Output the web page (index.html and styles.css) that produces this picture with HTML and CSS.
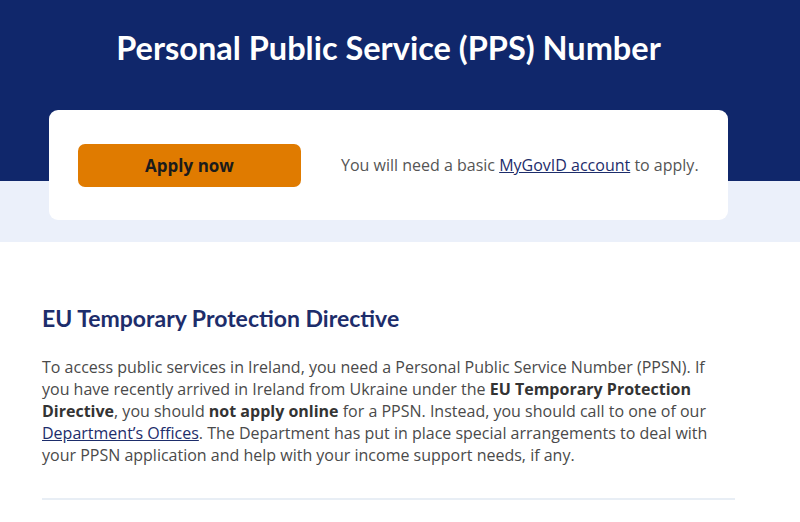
FILE: index.html
```
<!DOCTYPE html>
<html lang="en">
<head>
<meta charset="utf-8">
<title>Personal Public Service (PPS) Number</title>
<link rel="stylesheet" href="styles.css">
</head>
<body>
<header class="hero">
  <div class="hero-inner">
    <h1 class="title">Personal Public Service (PPS) Number</h1>
    <div class="card">
      <a class="btn" href="#">Apply now</a>
      <p class="note">You will need a basic <a href="#">MyGovID account</a> to apply.</p>
    </div>
  </div>
</header>
<main class="content">
  <h2 class="section-title">EU Temporary Protection Directive</h2>
  <p class="body-text">To access public services in Ireland, you need a Personal Public Service Number (PPSN). If you have recently arrived in Ireland from Ukraine under the <strong>EU Temporary Protection Directive</strong>, you should <strong>not apply online</strong> for a PPSN. Instead, you should call to one of our <a href="#">Department’s Offices</a>. The Department has put in place special arrangements to deal with your PPSN application and help with your income support needs, if any.</p>
  <hr class="rule">
</main>
</body>
</html>
```
FILE: styles.css
```
* { box-sizing: border-box; }
html, body { margin: 0; padding: 0; background: #fff; }
body { font-family: "Open Sans", "Liberation Sans", sans-serif; color: #4a4a4a; }

.hero {
  background: linear-gradient(#10276b 0, #10276b 181px, #ebf0fa 181px, #ebf0fa 100%);
  padding: 0 72px 22px 49px;
}
.hero-inner { display: flex; flex-direction: column; }
.title {
  margin: 0;
  padding-top: 29px;
  font-family: Lato, "Open Sans", sans-serif;
  font-weight: 700;
  font-size: 32.5px;
  line-height: 38px;
  color: #fff;
  text-align: center;
}
.card {
  margin-top: 43px;
  height: 110px;
  background: #fff;
  border-radius: 9px;
  padding: 0 29px;
  display: flex;
  align-items: center;
  gap: 40px;
}
.btn {
  display: flex;
  align-items: center;
  justify-content: center;
  width: 223px;
  height: 43px;
  background: #e07b00;
  border-radius: 7px;
  color: #1b1b1b;
  font-family: "Open Sans", sans-serif;
  font-weight: 700;
  font-size: 17px;
  text-decoration: none;
}
.note {
  margin: 0;
  font-size: 16px;
  color: #555;
}
.note a { color: #1d2d6b; }

.content { padding: 62px 65px 0 42px; }
.section-title {
  margin: 0;
  font-family: Lato, "Open Sans", sans-serif;
  font-weight: 700;
  font-size: 23px;
  line-height: 28px;
  color: #1d2d6b;
}
.body-text {
  margin: 24px 0 0;
  font-size: 16px;
  line-height: 22px;
  color: #4a4a4a;
}
.body-text strong { color: #333; }
.body-text a { color: #1d2d6b; }
.rule {
  margin: 32px 0 0;
  border: 0;
  height: 2px;
  background: #e8eef5;
}
```
